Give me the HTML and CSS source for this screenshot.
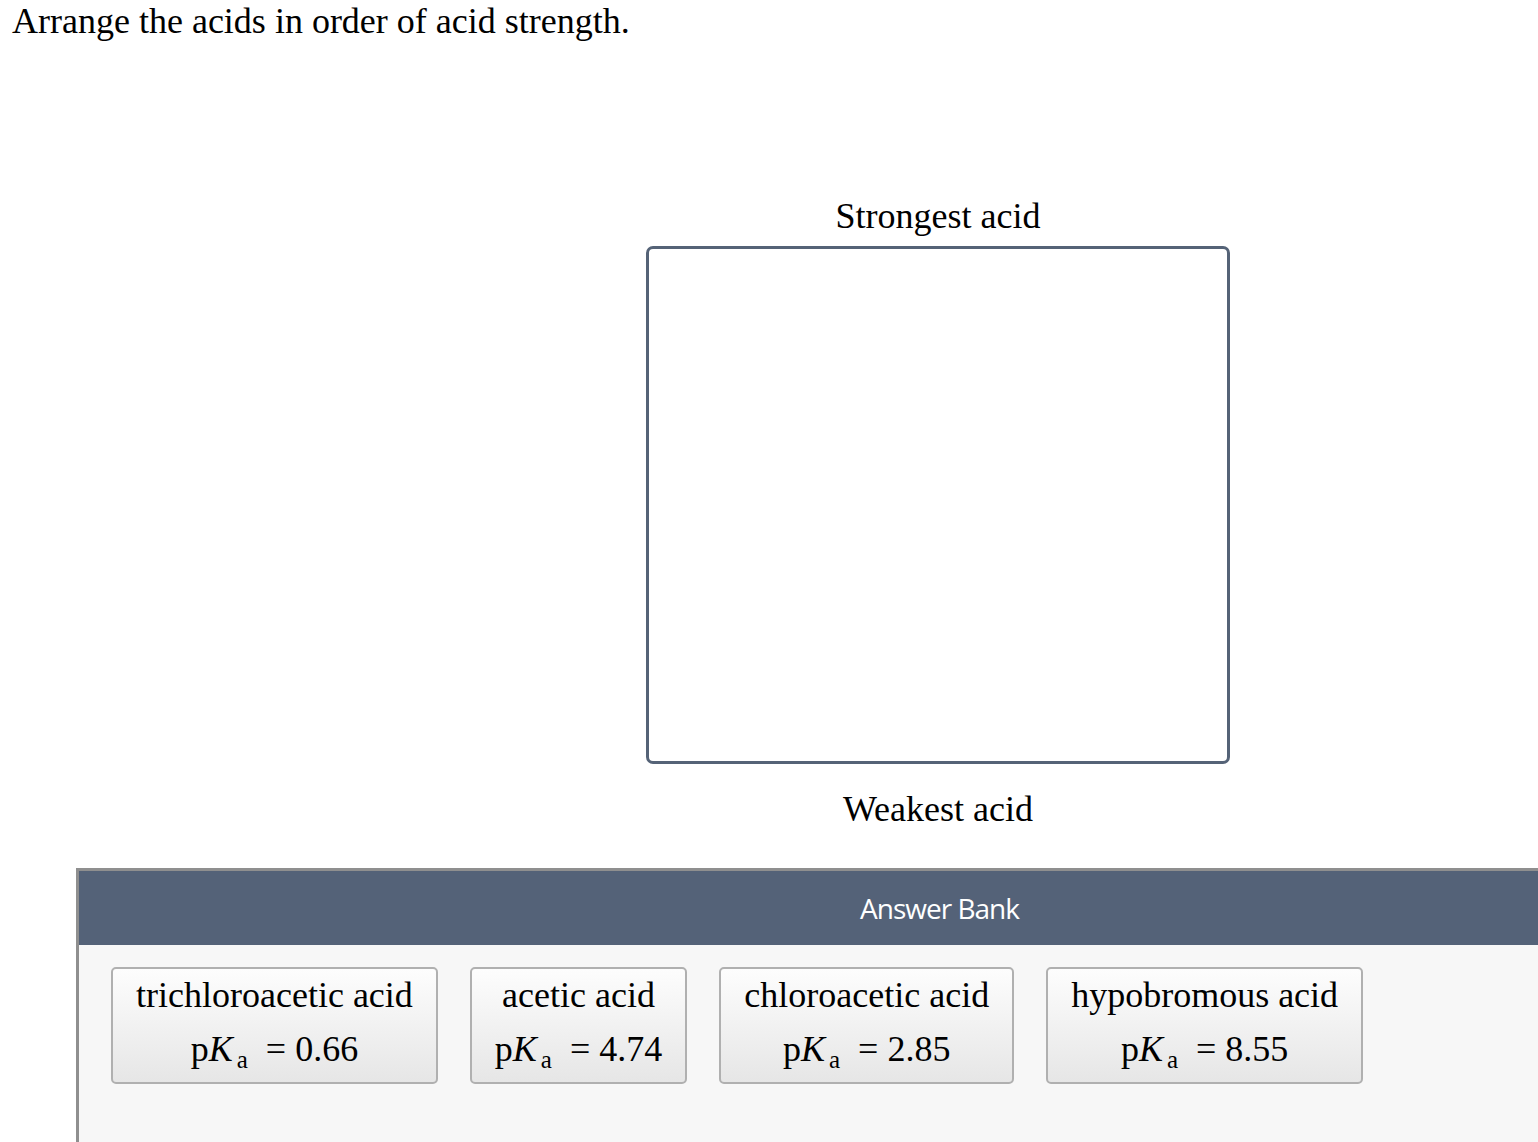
FILE: index.html
```html
<!DOCTYPE html>
<html lang="en">
<head>
    <meta charset="UTF-8">
    <title>Arrange the acids</title>
    <link rel="stylesheet" href="styles.css">
</head>
<body>
    <p class="question">Arrange the acids in order of acid strength.</p>

    <div class="workspace">
        <div class="ranking">
            <div class="rank-label">Strongest acid</div>
            <div class="drop-zone"></div>
            <div class="rank-label">Weakest acid</div>
        </div>

        <div class="answer-bank">
            <div class="bank-header">Answer Bank</div>
            <div class="bank-items">
                <div class="tile">
                    <div class="tile-name">trichloroacetic acid</div>
                    <div class="tile-pka">p<i>K</i><sub>a</sub> = 0.66</div>
                </div>
                <div class="tile">
                    <div class="tile-name">acetic acid</div>
                    <div class="tile-pka">p<i>K</i><sub>a</sub> = 4.74</div>
                </div>
                <div class="tile">
                    <div class="tile-name">chloroacetic acid</div>
                    <div class="tile-pka">p<i>K</i><sub>a</sub> = 2.85</div>
                </div>
                <div class="tile">
                    <div class="tile-name">hypobromous acid</div>
                    <div class="tile-pka">p<i>K</i><sub>a</sub> = 8.55</div>
                </div>
            </div>
        </div>
    </div>
</body>
</html>
```

FILE: styles.css
```css
html, body {
    overflow: hidden;
}
body {
    margin: 0;
    font-family: "Liberation Serif", "Times New Roman", serif;
    color: #000;
    background-color: #fff;
}
.question {
    margin: 0;
    padding: 1px 12px 0;
    font-size: 36px;
    line-height: 40px;
}
.workspace {
    margin-left: 76px;
}
.ranking {
    display: flex;
    flex-direction: column;
    align-items: center;
    padding-top: 153px;
    padding-left: 262px;
}
.rank-label {
    font-size: 36px;
    line-height: 44px;
}
.drop-zone {
    width: 578px;
    height: 512px;
    border: 3px solid #556377;
    border-radius: 7px;
    margin: 8px 0 23px;
}
.answer-bank {
    margin-top: 37px;
    border-top: 3px solid #8f8f8f;
    border-left: 3px solid #8f8f8f;
    background-color: #f7f7f7;
    height: 300px;
}
.bank-header {
    background-color: #546278;
    color: #fff;
    font-family: "Open Sans", "Liberation Sans", sans-serif;
    font-size: 28px;
    letter-spacing: -1px;
    text-align: center;
    height: 74px;
    line-height: 74px;
    padding-left: 262px;
}
.bank-items {
    display: flex;
    align-items: flex-start;
    gap: 32px;
    padding: 22px 32px;
}
.tile {
    border: 2px solid #b0b0b0;
    border-radius: 5px;
    background: linear-gradient(#fdfdfd, #e6e6e6);
    padding: 4px 23px 1px;
    text-align: center;
    font-size: 36px;
}
.tile-name {
    line-height: 44px;
}
.tile-pka {
    line-height: 64px;
}
.tile-pka sub {
    font-size: 25px;
    vertical-align: -7px;
    line-height: 0;
    margin: 0 9px 0 4px;
}
```
